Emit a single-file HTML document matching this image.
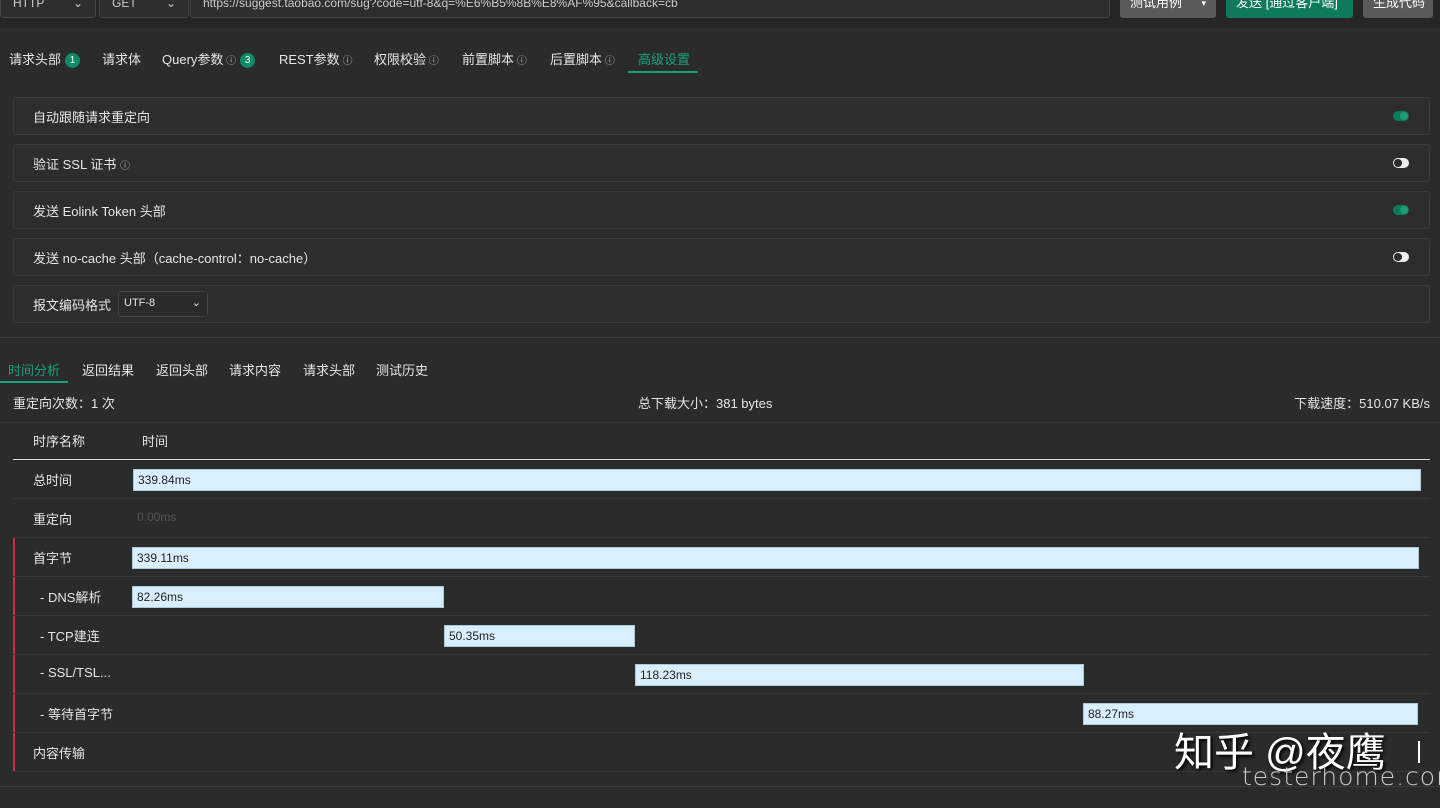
<!DOCTYPE html>
<html><head><meta charset="utf-8"><style>
*{box-sizing:border-box;margin:0;padding:0}
body{width:1440px;height:808px;background:#2b2b2b;color:#e6e6e6;font-family:"Liberation Sans","Noto Sans CJK SC",sans-serif;font-size:13px;position:relative;overflow:hidden;white-space:nowrap}
.a{position:absolute}
.top{left:0;top:0;width:1440px;height:28px;background:#262626}
.inp{top:-8px;height:26px;border:1px solid #444;background:#2e2e2e;border-radius:3px;color:#ccc;font-size:12px;padding:3px 12px}
.btn{top:-8px;height:26px;border-radius:3px;font-size:13px;color:#fff;padding:4px 10px;line-height:14px}
.tab{top:49px;font-size:13px}
.badge{display:inline-block;width:15px;height:15px;border-radius:50%;background:#0f8a66;color:#fff;font-size:10px;text-align:center;line-height:15px;margin-left:4px;vertical-align:1px}
.i{font-size:10px;color:#bbb}
.card{left:13px;width:1417px;height:38px;border:1px solid #3a3a3a;border-radius:3px;background:#2d2d2d}
.card>span{position:absolute;left:19px;top:9px}
.tg{position:absolute;right:20px;top:13px;width:16px;height:10px;border-radius:5px}
.tg.on{background:#0f7a5a}.tg.on:after{content:"";position:absolute;right:1px;top:1px;width:8px;height:8px;border-radius:50%;background:#1f9c74}
.tg.off{background:#eee}.tg.off:after{content:"";position:absolute;left:1px;top:1px;width:8px;height:8px;border-radius:50%;background:#2b2b2b}
.row{left:13px;width:1417px;height:39px;border-bottom:1px solid #383838}
.row .n{position:absolute;left:20px;top:10px}
.red{box-shadow:inset 2px 0 0 #c0334a}
.bar{position:absolute;top:9px;height:22px;background:#d9effd;color:#222;font-size:12px;padding:3px 4px;border:1px solid #a9c9df}
</style></head><body>
<div class="a top"></div>
<div class="a inp" style="left:0;width:96px">HTTP<span style="float:right">⌄</span></div>
<div class="a inp" style="left:99px;width:90px">GET<span style="float:right">⌄</span></div>
<div class="a inp" style="left:190px;width:920px">https://suggest.taobao.com/sug?code=utf-8&amp;q=%E6%B5%8B%E8%AF%95&amp;callback=cb</div>
<div class="a btn" style="left:1120px;width:96px;background:#5a5a5a">测试用例 <span style="float:right;font-size:9px">▾</span></div>
<div class="a btn" style="left:1226px;width:127px;background:#0d7a5c">发送 [通过客户端]</div>
<div class="a btn" style="left:1363px;width:70px;background:#5a5a5a">生成代码</div>

<div class="a tab" style="left:9px">请求头部<span class="badge">1</span></div>
<div class="a tab" style="left:102px">请求体</div>
<div class="a tab" style="left:162px">Query参数<span class="i"> ⓘ</span><span class="badge">3</span></div>
<div class="a tab" style="left:279px">REST参数<span class="i"> ⓘ</span></div>
<div class="a tab" style="left:374px">权限校验<span class="i"> ⓘ</span></div>
<div class="a tab" style="left:462px">前置脚本<span class="i"> ⓘ</span></div>
<div class="a tab" style="left:550px">后置脚本<span class="i"> ⓘ</span></div>
<div class="a tab" style="left:638px;color:#16a37a">高级设置</div>
<div class="a" style="left:628px;top:71px;width:70px;height:2px;background:#16a37a"></div>

<div class="a card" style="top:97px"><span>自动跟随请求重定向</span><div class="tg on"></div></div>
<div class="a card" style="top:144px"><span>验证 SSL 证书 <span class="i">ⓘ</span></span><div class="tg off"></div></div>
<div class="a card" style="top:191px"><span>发送 Eolink Token 头部</span><div class="tg on"></div></div>
<div class="a card" style="top:238px"><span>发送 no-cache 头部（cache-control：no-cache）</span><div class="tg off"></div></div>
<div class="a card" style="top:285px"><span>报文编码格式</span><div style="position:absolute;left:104px;top:5px;width:90px;height:26px;border:1px solid #444;border-radius:3px;font-size:11px;padding:5px 5px;background:#2a2a2a">UTF-8<span style="position:absolute;right:6px;top:4px">⌄</span></div></div>
<div class="a" style="left:0;top:337px;width:1440px;height:1px;background:#3a3a3a"></div>

<div class="a tab" style="left:8px;top:360px;color:#16a37a">时间分析</div>
<div class="a" style="left:0;top:381px;width:68px;height:2px;background:#16a37a"></div>
<div class="a tab" style="left:82px;top:360px">返回结果</div>
<div class="a tab" style="left:156px;top:360px">返回头部</div>
<div class="a tab" style="left:229px;top:360px">请求内容</div>
<div class="a tab" style="left:303px;top:360px">请求头部</div>
<div class="a tab" style="left:376px;top:360px">测试历史</div>

<div class="a" style="left:13px;top:393px">重定向次数：1 次</div>
<div class="a" style="left:638px;top:393px">总下载大小：381 bytes</div>
<div class="a" style="right:10px;top:393px">下载速度：510.07 KB/s</div>
<div class="a" style="left:0;top:422px;width:1440px;height:1px;background:#383838"></div>
<div class="a" style="left:33px;top:431px">时序名称</div>
<div class="a" style="left:142px;top:431px">时间</div>
<div class="a" style="left:13px;top:459px;width:1417px;height:1px;background:#ddd"></div>

<div class="a row" style="top:460px"><span class="n">总时间</span><div class="bar" style="left:120px;width:1288px">339.84ms</div></div>
<div class="a row" style="top:499px"><span class="n">重定向</span><span style="position:absolute;left:124px;top:11px;color:#555;font-size:12px">0.00ms</span></div>
<div class="a row red" style="top:538px"><span class="n">首字节</span><div class="bar" style="left:119px;width:1287px">339.11ms</div></div>
<div class="a row red" style="top:577px"><span class="n" style="left:27px">- DNS解析</span><div class="bar" style="left:119px;width:312px">82.26ms</div></div>
<div class="a row red" style="top:616px"><span class="n" style="left:27px">- TCP建连</span><div class="bar" style="left:431px;width:191px">50.35ms</div></div>
<div class="a row red" style="top:655px"><span class="n" style="left:27px">- SSL/TSL...</span><div class="bar" style="left:622px;width:449px">118.23ms</div></div>
<div class="a row red" style="top:694px"><span class="n" style="left:27px">- 等待首字节</span><div class="bar" style="left:1070px;width:335px">88.27ms</div></div>
<div class="a row red" style="top:733px"><span class="n">内容传输</span></div>
<div class="a" style="left:0;top:786px;width:1440px;height:1px;background:#3a3a3a"></div>

<div class="a" style="left:1174px;top:720px;font-size:40px;color:#fff;text-shadow:2px 2px 3px #000">知乎 @夜鹰</div>
<div class="a" style="left:1418px;top:741px;width:2px;height:22px;background:#fff"></div>
<div class="a" style="left:1242px;top:762px;font-size:25px;color:#ccc;font-family:'DejaVu Sans',sans-serif;font-weight:200;letter-spacing:1px">testerhome.com</div>
</body></html>
